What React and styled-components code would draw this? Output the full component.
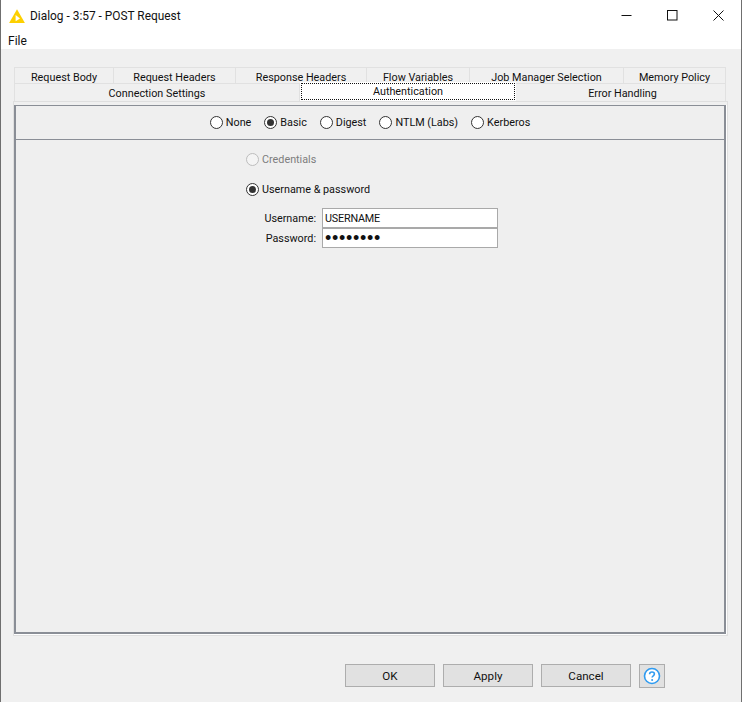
import React from "react";
import styled, { createGlobalStyle } from "styled-components";

const Global = createGlobalStyle`
  html, body { margin: 0; padding: 0; background: #f0f0f0; }
  #root { width: 742px; height: 702px; overflow: hidden; }
`;

const Window = styled.div`
  width: 742px; height: 702px; box-sizing: border-box;
  display: flex; flex-direction: column;
  background: #f0f0f0;
  border-left: 1px solid #6f6f6f;
  border-right: 1px solid #6f6f6f;
  font-family: Roboto, "Liberation Sans", sans-serif;
  font-size: 10.8px; color: #111;
`;
const TitleBar = styled.div`
  height: 31px; flex: none; background: #fff; display: flex; align-items: center;
  padding-left: 8px; font-size: 11.9px; color: #111;
`;
const TitleText = styled.span` margin-left: 5px; flex: 1; `;
const WinButton = styled.div`
  width: 46px; height: 31px; display: flex; align-items: center; justify-content: center;
  svg { display: block; }
`;
const MenuBar = styled.div`
  height: 18px; flex: none; background: #fff; padding-left: 7px; font-size: 12px; line-height: 20px;
`;
const Body = styled.div`
  flex: 1; display: flex; flex-direction: column; padding: 18px 13px 0 12px; min-height: 0;
`;
const TabRow = styled.div`
  display: flex; height: ${p => p.$h}px; flex: none; padding-left: 1px;
`;
const Tab = styled.div`
  width: ${p => p.$w}px; box-sizing: border-box; flex: none;
  border: 1px solid #e1e1e1; border-bottom: 0; border-left-width: ${p => (p.$first ? 1 : 0)}px;
  display: flex; align-items: center; justify-content: center;
  padding-top: ${p => p.$pt ?? 2}px; padding-left: ${p => p.$pl ?? 0}px;
`;
const ActiveTab = styled.div`
  width: ${p => p.$w}px; height: 19px; margin-top: -1px; flex: none; box-sizing: border-box;
  background: #fff; display: flex; align-items: center; justify-content: center;
  position: relative; z-index: 1; padding-bottom: 1px;
  outline: 1px dotted #111; outline-offset: -2px;
`;
const Panel = styled.div`
  height: 535px; flex: none; box-sizing: border-box;
  border: 1px solid #dfdfdf; padding: 3px 1px 1px 0;
  display: flex; flex-direction: column;
`;
const PanelInner = styled.div`
  flex: 1; display: flex; flex-direction: column; background: #efefef;
  min-height: 0; box-sizing: border-box;
  border-top: 1px solid #8a8e96;
  border-left: 2px solid #8a8e96;
  border-right: 2px solid #8a8e96;
  border-bottom: 2px solid #8a8e96;
  box-shadow: 0 1px 0 #fff, 1px 0 0 #fff;
`;
const TypeRow = styled.div`
  height: 33px; flex: none; display: flex; align-items: center; justify-content: center;
  gap: 13px; border-bottom: 1px solid #8a8e96;
`;
const Radio = styled.label`
  display: inline-flex; align-items: center; gap: 3px;
  color: ${p => (p.$disabled ? "#7d7d7d" : "#111")};
`;
const Dot = styled.span`
  width: 13px; height: 13px; border-radius: 50%; box-sizing: border-box; flex: none;
  border: 1px solid ${p => (p.$disabled ? "#bdbdbd" : "#333")};
  background: ${p => (p.$disabled ? "#f4f4f4" : "#fff")};
  display: flex; align-items: center; justify-content: center;
  &::after {
    content: ""; width: 7px; height: 7px; border-radius: 50%;
    background: ${p => (p.$on ? "#333" : "transparent")};
  }
`;
const Content = styled.div`
  flex: 1; display: flex; flex-direction: column; align-items: flex-start;
  padding: 13px 0 0 230px;
`;
const CredBlock = styled.div`
  display: flex; flex-direction: column; gap: 17px;
`;
const Fields = styled.div`
  display: grid; grid-template-columns: 76px 176px; grid-auto-rows: 20px;
  align-items: stretch; margin: 12px 0 0 0;
`;
const FieldLabel = styled.div`
  display: flex; align-items: center; justify-content: flex-end; padding-right: 6px;
`;
const Input = styled.div`
  box-sizing: border-box; background: #fff; border: 1px solid #a9a9a9;
  display: flex; align-items: center; padding-left: 2px; letter-spacing: -0.2px;
`;
const Bullets = styled.span`
  font-size: 18px; line-height: 14px; letter-spacing: 0.7px; font-family: "Liberation Sans", sans-serif;
`;
const Footer = styled.div`
  display: flex; justify-content: flex-end; align-items: flex-start; gap: 8px;
  padding: 28px 63px 0 0;
`;
const Btn = styled.button`
  width: 90px; height: 23px; box-sizing: border-box; padding: 0;
  background: #e1e1e1; border: 1px solid #adadad;
  font: inherit; font-size: 11.6px; color: #111;
`;
const HelpBtn = styled.button`
  width: 26px; height: 24px; box-sizing: border-box; padding: 0;
  background: #e1e1e1; border: 1px solid #adadad;
  display: flex; align-items: center; justify-content: center;
`;

const row1 = [
  ["Request Body", 100], ["Request Headers", 122], ["Response Headers", 131],
  ["Flow Variables", 103], ["Job Manager Selection", 154], ["Memory Policy", 102],
];

export default function App() {
  return (
    <Window>
      <Global />
      <TitleBar>
        <svg width="16" height="14" viewBox="0 0 16 14">
          <path d="M8 0.3 L15.9 14 H0.1 Z" fill="#fdd000" />
          <path d="M6.6 6 L11 9.4 L6.6 12.2 Z" fill="#fff" />
        </svg>
        <TitleText>Dialog - 3:57 - POST Request</TitleText>
        <WinButton>
          <svg width="11" height="11" viewBox="0 0 11 11"><path d="M0.5 5.5H10.5" stroke="#111" /></svg>
        </WinButton>
        <WinButton>
          <svg width="11" height="11" viewBox="0 0 11 11"><rect x="0.5" y="0.5" width="9.5" height="9.5" fill="none" stroke="#111" /></svg>
        </WinButton>
        <WinButton>
          <svg width="11" height="11" viewBox="0 0 11 11"><path d="M0.5 0.5L10.5 10.5M10.5 0.5L0.5 10.5" stroke="#111" /></svg>
        </WinButton>
      </TitleBar>
      <MenuBar>File</MenuBar>
      <Body>
        <TabRow $h={16}>
          {row1.map(([t, w], i) => <Tab key={t} $w={w} $first={i === 0} $pt={3}>{t}</Tab>)}
        </TabRow>
        <TabRow $h={18}>
          <Tab $w={286} $first>Connection Settings</Tab>
          <ActiveTab $w={216}>Authentication</ActiveTab>
          <Tab $w={210} $pl={4}>Error Handling</Tab>
        </TabRow>
        <Panel>
          <PanelInner>
            <TypeRow>
              <Radio><Dot />None</Radio>
              <Radio><Dot $on />Basic</Radio>
              <Radio><Dot />Digest</Radio>
              <Radio><Dot />NTLM (Labs)</Radio>
              <Radio><Dot />Kerberos</Radio>
            </TypeRow>
            <Content>
              <CredBlock>
                <Radio $disabled><Dot $disabled />Credentials</Radio>
                <Radio><Dot $on />Username &amp; password</Radio>
              </CredBlock>
              <Fields>
                <FieldLabel>Username:</FieldLabel>
                <Input>USERNAME</Input>
                <FieldLabel>Password:</FieldLabel>
                <Input><Bullets>••••••••</Bullets></Input>
              </Fields>
            </Content>
          </PanelInner>
        </Panel>
        <Footer>
          <Btn>OK</Btn>
          <Btn>Apply</Btn>
          <Btn>Cancel</Btn>
          <HelpBtn>
            <svg width="18" height="18" viewBox="0 0 18 18">
              <circle cx="9" cy="9" r="7.5" fill="#fff" stroke="#2f9bf0" strokeWidth="1.6" />
              <path d="M6.6 7.2C6.6 5.8 7.7 5 9 5c1.4 0 2.4.8 2.4 2 0 1.8-2.3 1.8-2.3 3.6" fill="none" stroke="#2f9bf0" strokeWidth="1.6" />
              <circle cx="9.1" cy="13" r="1" fill="#2f9bf0" />
            </svg>
          </HelpBtn>
        </Footer>
      </Body>
    </Window>
  );
}
